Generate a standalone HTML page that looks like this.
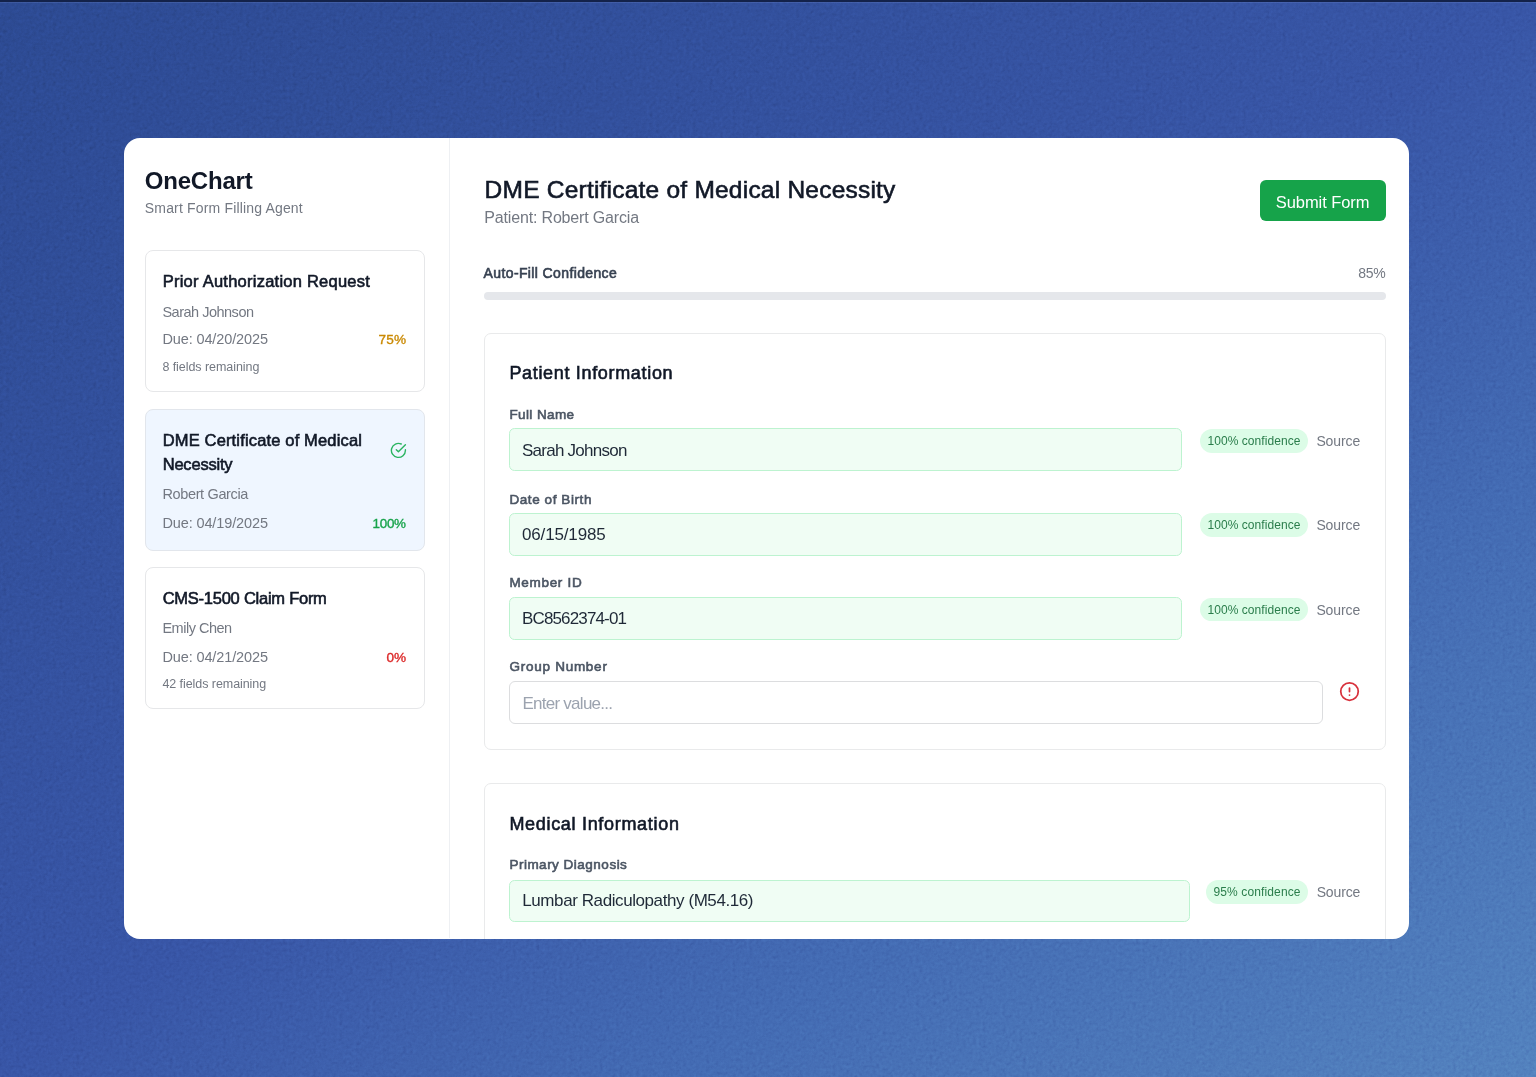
<!DOCTYPE html>
<html><head><meta charset="utf-8">
<style>
html,body{margin:0;padding:0;}
body{width:1536px;height:1077px;overflow:hidden;position:relative;font-family:"Liberation Sans",sans-serif;
 background:linear-gradient(to bottom right,#274181 0%,#314b98 50%,#3b5ea7 72%,#4972b4 100%);}
.noise{position:absolute;left:0;top:0;width:1536px;height:1077px;opacity:.3;mix-blend-mode:overlay;}
.topline{position:absolute;left:0;top:0;width:1536px;height:2px;background:#13224a;box-shadow:0 1px 0 rgba(140,160,220,.18);}
.card{position:absolute;left:124px;top:137.8px;width:1285.4px;height:800.8px;background:#fff;border-radius:16px;overflow:hidden;}
.inner{position:absolute;left:-124px;top:-137.8px;width:1536px;height:1077px;}
.b{position:absolute;box-sizing:border-box;}
.t{position:absolute;white-space:nowrap;}
</style></head><body>
<svg class="noise" width="1536" height="1077"><filter id="nf"><feTurbulence type="fractalNoise" baseFrequency="0.3" numOctaves="3" stitchTiles="stitch"/><feColorMatrix type="matrix" values="0.33 0.33 0.33 0 0  0.33 0.33 0.33 0 0  0.33 0.33 0.33 0 0  0 0 0 0 1"/></filter><rect width="100%" height="100%" filter="url(#nf)"/></svg>
<div class="topline"></div>
<div class="card"><div class="inner">
 <!-- divider -->
 <div class="b" style="left:449px;top:138px;width:1px;height:800px;background:#eef0f3;"></div>
 <!-- sidebar cards -->
 <div class="b" style="left:144.5px;top:250px;width:280.5px;height:141.5px;border:1px solid #e6e7e9;border-radius:8px;"></div>
 <div class="b" style="left:144.5px;top:408.6px;width:280.5px;height:142.4px;border:1px solid #e2e6ec;background:#eff6ff;border-radius:8px;"></div>
 <div class="b" style="left:144.5px;top:567px;width:280.5px;height:142px;border:1px solid #e6e7e9;border-radius:8px;"></div>
 <svg class="b" style="left:390.2px;top:442.4px;" width="16.8" height="16.8" viewBox="0 0 24 24" fill="none" stroke="#2ab460" stroke-width="2" stroke-linecap="round" stroke-linejoin="round"><path d="M22 11.08V12a10 10 0 1 1-5.93-9.14"/><polyline points="22 4 12 14.01 9 11.01"/></svg>
 <!-- header -->
 <div class="b" style="left:1260px;top:180px;width:126px;height:41px;background:#16a34a;border-radius:6px;"></div>
 <div class="b" style="left:484px;top:292px;width:902px;height:8px;background:#e5e7eb;border-radius:4px;"></div>
 <!-- section 1 -->
 <div class="b" style="left:483.5px;top:333px;width:902.6px;height:416.5px;border:1px solid #e9eaeb;border-radius:7px;"></div>
 <div class="b" style="left:509px;top:428.2px;width:672.8px;height:43px;background:#f0fdf4;border:1px solid #bdf3d0;border-radius:5.5px;"></div>
 <div class="b" style="left:509px;top:512.5px;width:672.8px;height:43px;background:#f0fdf4;border:1px solid #bdf3d0;border-radius:5.5px;"></div>
 <div class="b" style="left:509px;top:597px;width:672.8px;height:42.7px;background:#f0fdf4;border:1px solid #bdf3d0;border-radius:5.5px;"></div>
 <div class="b" style="left:1200px;top:429px;width:108px;height:23.5px;background:#dcfce7;border-radius:12px;"></div>
 <div class="b" style="left:1200px;top:513px;width:108px;height:23.5px;background:#dcfce7;border-radius:12px;"></div>
 <div class="b" style="left:1200px;top:597.5px;width:108px;height:23.5px;background:#dcfce7;border-radius:12px;"></div>
 <div class="b" style="left:509px;top:681.3px;width:814px;height:43.2px;background:#fff;border:1px solid #dcdddf;border-radius:6px;"></div>
 <svg class="b" style="left:1339.3px;top:681px;" width="21" height="21" viewBox="0 0 24 24" fill="none" stroke="#d8313c" stroke-width="2" stroke-linecap="round" stroke-linejoin="round"><circle cx="12" cy="12" r="10"/><line x1="12" y1="8" x2="12" y2="12"/><line x1="12" y1="16" x2="12.01" y2="16"/></svg>
 <!-- section 2 -->
 <div class="b" style="left:483.5px;top:783px;width:902.6px;height:400px;border:1px solid #e9eaeb;border-radius:7px;"></div>
 <div class="b" style="left:509px;top:880px;width:680.5px;height:42px;background:#f0fdf4;border:1px solid #bdf3d0;border-radius:5.5px;"></div>
 <div class="b" style="left:1206px;top:880px;width:102px;height:23.6px;background:#dcfce7;border-radius:12px;"></div>
<div class="t" style="left:144.80px;top:166.48px;font-size:24px;line-height:29px;font-weight:700;color:#111827;letter-spacing:-0.217px;">OneChart</div>
<div class="t" style="left:144.80px;top:200.05px;font-size:14px;line-height:17px;font-weight:400;color:#737882;letter-spacing:0.167px;">Smart Form Filling Agent</div>
<div class="t" style="left:162.70px;top:270.58px;font-size:16.5px;line-height:20px;font-weight:400;color:#111827;letter-spacing:0.243px;-webkit-text-stroke:0.6px #111827;">Prior Authorization Request</div>
<div class="t" style="left:162.40px;top:303.57px;font-size:14.5px;line-height:17px;font-weight:400;color:#737882;letter-spacing:-0.493px;">Sarah Johnson</div>
<div class="t" style="left:162.40px;top:331.47px;font-size:14.5px;line-height:17px;font-weight:400;color:#737882;letter-spacing:-0.116px;">Due: 04/20/2025</div>
<div class="t" style="left:378.57px;top:332.28px;font-size:13.6px;line-height:16px;font-weight:400;color:#ca8a04;letter-spacing:0.125px;-webkit-text-stroke:0.35px #ca8a04;">75%</div>
<div class="t" style="left:162.40px;top:359.97px;font-size:12.5px;line-height:15px;font-weight:400;color:#737882;letter-spacing:-0.059px;">8 fields remaining</div>
<div class="t" style="left:162.70px;top:429.58px;font-size:16.5px;line-height:20px;font-weight:400;color:#111827;letter-spacing:0.157px;-webkit-text-stroke:0.6px #111827;">DME Certificate of Medical</div>
<div class="t" style="left:162.70px;top:453.58px;font-size:16.5px;line-height:20px;font-weight:400;color:#111827;letter-spacing:-0.203px;-webkit-text-stroke:0.6px #111827;">Necessity</div>
<div class="t" style="left:162.40px;top:486.07px;font-size:14.5px;line-height:17px;font-weight:400;color:#737882;letter-spacing:-0.353px;">Robert Garcia</div>
<div class="t" style="left:162.40px;top:515.37px;font-size:14.5px;line-height:17px;font-weight:400;color:#737882;letter-spacing:-0.116px;">Due: 04/19/2025</div>
<div class="t" style="left:372.57px;top:516.25px;font-size:13.4px;line-height:16px;font-weight:400;color:#16a34a;letter-spacing:-0.285px;-webkit-text-stroke:0.35px #16a34a;">100%</div>
<div class="t" style="left:162.70px;top:588.18px;font-size:16.5px;line-height:20px;font-weight:400;color:#111827;letter-spacing:-0.251px;-webkit-text-stroke:0.6px #111827;">CMS-1500 Claim Form</div>
<div class="t" style="left:162.40px;top:620.27px;font-size:14.5px;line-height:17px;font-weight:400;color:#737882;letter-spacing:-0.485px;">Emily Chen</div>
<div class="t" style="left:162.40px;top:649.47px;font-size:14.5px;line-height:17px;font-weight:400;color:#737882;letter-spacing:-0.116px;">Due: 04/21/2025</div>
<div class="t" style="left:386.57px;top:650.28px;font-size:13.6px;line-height:16px;font-weight:400;color:#dc2626;letter-spacing:-0.202px;-webkit-text-stroke:0.35px #dc2626;">0%</div>
<div class="t" style="left:162.40px;top:676.67px;font-size:12.5px;line-height:15px;font-weight:400;color:#737882;letter-spacing:-0.063px;">42 fields remaining</div>
<div class="t" style="left:484.60px;top:174.91px;font-size:24.5px;line-height:29px;font-weight:400;color:#111827;letter-spacing:0.222px;-webkit-text-stroke:0.6px #111827;">DME Certificate of Medical Necessity</div>
<div class="t" style="left:484.30px;top:208.05px;font-size:16px;line-height:19px;font-weight:400;color:#737882;letter-spacing:-0.167px;">Patient: Robert Garcia</div>
<div class="t" style="left:1275.80px;top:191.68px;font-size:16.5px;line-height:20px;font-weight:400;color:#ffffff;letter-spacing:-0.076px;">Submit Form</div>
<div class="t" style="left:483.60px;top:265.05px;font-size:14px;line-height:17px;font-weight:400;color:#374151;letter-spacing:0.375px;-webkit-text-stroke:0.6px #374151;">Auto-Fill Confidence</div>
<div class="t" style="left:1358.30px;top:265.05px;font-size:14px;line-height:17px;font-weight:400;color:#737882;letter-spacing:-0.300px;">85%</div>
<div class="t" style="left:509.40px;top:362.46px;font-size:18px;line-height:22px;font-weight:400;color:#111827;letter-spacing:0.672px;-webkit-text-stroke:0.6px #111827;">Patient Information</div>
<div class="t" style="left:509.40px;top:406.82px;font-size:13.5px;line-height:16px;font-weight:400;color:#4b5563;letter-spacing:0.401px;-webkit-text-stroke:0.6px #4b5563;">Full Name</div>
<div class="t" style="left:522.00px;top:441.01px;font-size:17px;line-height:20px;font-weight:400;color:#1f2937;letter-spacing:-0.752px;">Sarah Johnson</div>
<div class="t" style="left:1207.40px;top:433.84px;font-size:12px;line-height:14px;font-weight:400;color:#2a7d4b;letter-spacing:0.071px;">100% confidence</div>
<div class="t" style="left:1316.40px;top:432.75px;font-size:14px;line-height:17px;font-weight:400;color:#737882;letter-spacing:-0.116px;">Source</div>
<div class="t" style="left:509.40px;top:491.82px;font-size:13.5px;line-height:16px;font-weight:400;color:#4b5563;letter-spacing:0.587px;-webkit-text-stroke:0.6px #4b5563;">Date of Birth</div>
<div class="t" style="left:522.00px;top:525.31px;font-size:17px;line-height:20px;font-weight:400;color:#1f2937;letter-spacing:-0.154px;">06/15/1985</div>
<div class="t" style="left:1207.40px;top:518.14px;font-size:12px;line-height:14px;font-weight:400;color:#2a7d4b;letter-spacing:0.071px;">100% confidence</div>
<div class="t" style="left:1316.40px;top:517.05px;font-size:14px;line-height:17px;font-weight:400;color:#737882;letter-spacing:-0.116px;">Source</div>
<div class="t" style="left:509.40px;top:575.12px;font-size:13.5px;line-height:16px;font-weight:400;color:#4b5563;letter-spacing:0.693px;-webkit-text-stroke:0.6px #4b5563;">Member ID</div>
<div class="t" style="left:522.00px;top:609.41px;font-size:17px;line-height:20px;font-weight:400;color:#1f2937;letter-spacing:-0.855px;">BC8562374-01</div>
<div class="t" style="left:1207.40px;top:602.94px;font-size:12px;line-height:14px;font-weight:400;color:#2a7d4b;letter-spacing:0.071px;">100% confidence</div>
<div class="t" style="left:1316.40px;top:601.85px;font-size:14px;line-height:17px;font-weight:400;color:#737882;letter-spacing:-0.116px;">Source</div>
<div class="t" style="left:509.40px;top:658.82px;font-size:13.5px;line-height:16px;font-weight:400;color:#4b5563;letter-spacing:0.745px;-webkit-text-stroke:0.6px #4b5563;">Group Number</div>
<div class="t" style="left:522.40px;top:693.71px;font-size:17px;line-height:20px;font-weight:400;color:#9ca3af;letter-spacing:-0.733px;">Enter value...</div>
<div class="t" style="left:509.40px;top:813.26px;font-size:18px;line-height:22px;font-weight:400;color:#111827;letter-spacing:0.692px;-webkit-text-stroke:0.6px #111827;">Medical Information</div>
<div class="t" style="left:509.40px;top:856.92px;font-size:13.5px;line-height:16px;font-weight:400;color:#4b5563;letter-spacing:0.497px;-webkit-text-stroke:0.6px #4b5563;">Primary Diagnosis</div>
<div class="t" style="left:522.30px;top:890.81px;font-size:17px;line-height:20px;font-weight:400;color:#1f2937;letter-spacing:-0.416px;">Lumbar Radiculopathy (M54.16)</div>
<div class="t" style="left:1213.40px;top:885.24px;font-size:12px;line-height:14px;font-weight:400;color:#2a7d4b;letter-spacing:0.132px;">95% confidence</div>
<div class="t" style="left:1316.70px;top:884.15px;font-size:14px;line-height:17px;font-weight:400;color:#737882;letter-spacing:-0.156px;">Source</div>
</div></div>
</body></html>
